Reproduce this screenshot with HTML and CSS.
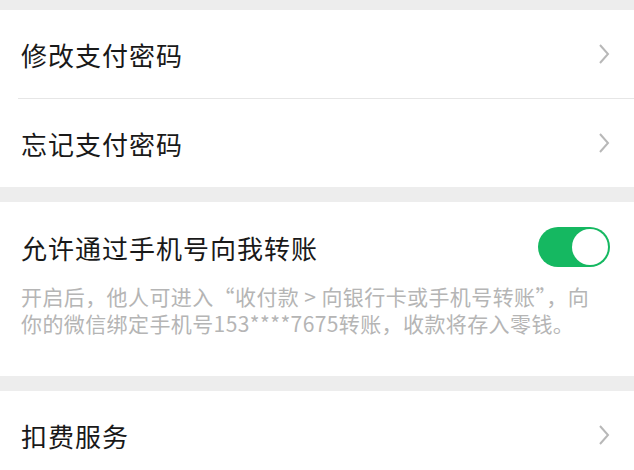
FILE: index.html
```html
<!doctype html>
<html lang="zh-CN">
  <head>
    <meta charset="UTF-8" />
    <title>支付设置</title>
    <link rel="stylesheet" href="styles.css">
  </head>
  <body>
    <div class="group">
      <div class="cell">
        <span class="cell-title">修改支付密码</span>
        <svg class="arrow" width="12" height="22" viewBox="0 0 12 22"><polyline points="2,2 10,11 2,20" /></svg>
      </div>
      <div class="cell">
        <span class="cell-title">忘记支付密码</span>
        <svg class="arrow" width="12" height="22" viewBox="0 0 12 22"><polyline points="2,2 10,11 2,20" /></svg>
      </div>
    </div>

    <div class="group switch-group">
      <div class="switch-row">
        <span class="cell-title">允许通过手机号向我转账</span>
        <span class="switch"><span class="knob"></span></span>
      </div>
      <p class="desc">开启后，他人可进入“收付款 &gt; 向银行卡或手机号转账”，向你的微信绑定手机号153****7675转账，收款将存入零钱。</p>
    </div>

    <div class="group">
      <div class="cell">
        <span class="cell-title">扣费服务</span>
        <svg class="arrow" width="12" height="22" viewBox="0 0 12 22"><polyline points="2,2 10,11 2,20" /></svg>
      </div>
    </div>
  </body>
</html>
```

FILE: styles.css
```css
body {
  font-family: "Noto Sans CJK SC", "Noto Sans", sans-serif;
  background-color: #ededed;
  margin: 0;
  padding-top: 10px;
  color: #191919;
}
.group {
  background-color: #fff;
  margin-bottom: 15px;
}
.cell {
  display: flex;
  align-items: center;
  justify-content: space-between;
  height: 88px;
  padding: 0 24px 0 21px;
}
.cell + .cell {
  border-top: 1px solid #e6e6e6;
  margin-left: 18px;
  padding-left: 3px;
}
.cell-title {
  font-size: 26px;
  letter-spacing: 1px;
}
.arrow polyline {
  fill: none;
  stroke: #b8b8b8;
  stroke-width: 2;
}
.switch-group {
  padding: 27px 20px 39px 21px;
}
.switch-row {
  display: flex;
  align-items: center;
  justify-content: space-between;
  height: 36px;
  padding-right: 4px;
}
.switch {
  width: 72px;
  height: 40px;
  border-radius: 20px;
  background-color: #15b861;
  display: flex;
  justify-content: flex-end;
  align-items: center;
  padding: 2px;
  box-sizing: border-box;
}
.knob {
  width: 36px;
  height: 36px;
  border-radius: 50%;
  background-color: #fff;
}
.desc {
  margin: 18px 0 0;
  padding-right: 12px;
  font-size: 21px;
  line-height: 27px;
  color: #b5b5b5;
  letter-spacing: 0.4px;
}
```
